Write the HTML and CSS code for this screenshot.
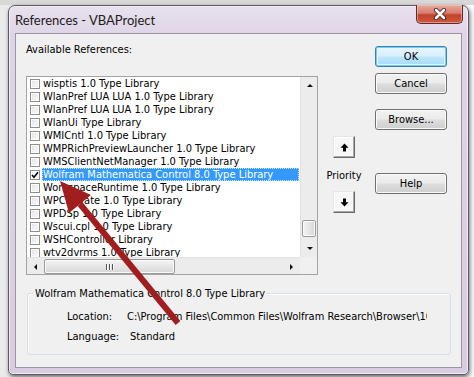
FILE: index.html
```html
<!DOCTYPE html>
<html>
<head>
<meta charset="utf-8">
<title>References - VBAProject</title>
<link rel="stylesheet" href="styles.css">
</head>
<body>
<div class="desk">
  <div class="window">
    <div class="titlebar">
      <span class="title">References - VBAProject</span>
      <div class="close">
        <svg width="16" height="12" viewBox="0 0 16 12"><path d="M4 2 L12 10 M12 2 L4 10" stroke="#3a1a14" stroke-width="4.2" stroke-linecap="round"/><path d="M4 2 L12 10 M12 2 L4 10" stroke="#fff" stroke-width="2.6" stroke-linecap="round"/></svg>
      </div>
    </div>
    <div class="client">
      <div class="top">
        <div class="refs">
          <div class="label">Available References:</div>
          <div class="listbox">
            <div class="rows">
              <div class="row"><span class="cb"></span><span class="txt">wisptis 1.0 Type Library</span></div>
              <div class="row"><span class="cb"></span><span class="txt">WlanPref LUA LUA 1.0 Type Library</span></div>
              <div class="row"><span class="cb"></span><span class="txt">WlanPref LUA LUA 1.0 Type Library</span></div>
              <div class="row"><span class="cb"></span><span class="txt">WlanUi Type Library</span></div>
              <div class="row"><span class="cb"></span><span class="txt">WMICntl 1.0 Type Library</span></div>
              <div class="row"><span class="cb"></span><span class="txt">WMPRichPreviewLauncher 1.0 Type Library</span></div>
              <div class="row"><span class="cb"></span><span class="txt">WMSClientNetManager 1.0 Type Library</span></div>
              <div class="row"><span class="cb checked"><svg width="8" height="8" viewBox="0 0 8 8"><path d="M1 4 L3 6.3 L7 1.2" fill="none" stroke="#000" stroke-width="1.6"/></svg></span><span class="txt selected">Wolfram Mathematica Control 8.0 Type Library</span></div>
              <div class="row"><span class="cb"></span><span class="txt">WorkspaceRuntime 1.0 Type Library</span></div>
              <div class="row"><span class="cb"></span><span class="txt">WPCPrivate 1.0 Type Library</span></div>
              <div class="row"><span class="cb"></span><span class="txt">WPDSp 1.0 Type Library</span></div>
              <div class="row"><span class="cb"></span><span class="txt">Wscui.cpl 1.0 Type Library</span></div>
              <div class="row"><span class="cb"></span><span class="txt">WSHController Library</span></div>
              <div class="row"><span class="cb"></span><span class="txt">wtv2dvrms 1.0 Type Library</span></div>
            </div>
            <div class="vscroll">
              <span class="arr up"></span>
              <div class="vtrack"><div class="vthumb"></div></div>
              <span class="arr down"></span>
            </div>
            <div class="hscroll">
              <span class="arr left"></span>
              <div class="htrack"><div class="hthumb"><i></i><i></i><i></i></div></div>
              <span class="arr right"></span>
            </div>
            <div class="corner"></div>
          </div>
        </div>
        <div class="priority">
          <button class="pbtn"><svg width="9" height="9" viewBox="0 0 9 9"><path d="M4.5 0.5 L8.5 4.8 L6 4.8 L6 8.5 L3 8.5 L3 4.8 L0.5 4.8 Z" fill="#000"/></svg></button>
          <div class="plabel">Priority</div>
          <button class="pbtn"><svg width="9" height="9" viewBox="0 0 9 9"><path d="M4.5 8.5 L8.5 4.2 L6 4.2 L6 0.5 L3 0.5 L3 4.2 L0.5 4.2 Z" fill="#000"/></svg></button>
        </div>
        <div class="actions">
          <button class="btn default">OK</button>
          <button class="btn cancel">Cancel</button>
          <button class="btn browse">Browse...</button>
          <button class="btn help">Help</button>
        </div>
      </div>
      <div class="group">
        <div class="legend">Wolfram Mathematica Control 8.0 Type Library</div>
        <div class="info first"><span class="k">Location:</span><span class="v path">C:\Program Files\Common Files\Wolfram Research\Browser\10.0\Mathematica.dll</span></div>
        <div class="info"><span class="k">Language:</span><span class="v lang">Standard</span></div>
      </div>
    </div>
  </div>
</div>
<svg class="arrow" width="474" height="377" viewBox="0 0 474 377">
  <line x1="80" y1="204" x2="178" y2="323" stroke="#a11e1e" stroke-width="6"/>
  <polygon points="60,181 69,213 91,195" fill="#a11e1e"/>
</svg>
</body>
</html>
```

FILE: styles.css
```css
* { box-sizing: border-box; }
html, body { margin: 0; padding: 0; }
body {
  width: 474px;
  height: 377px;
  overflow: hidden;
  position: relative;
  background: linear-gradient(to right, #ebebeb 0, #ebebeb 466px, #fbfbfb 466px);
  font-family: "DejaVu Sans Condensed", "DejaVu Sans", sans-serif;
  font-size: 11px;
  color: #000;
}
.desk {
  height: 377px;
  padding: 5px 0 0 8px;
  background: linear-gradient(#d8d8d8 0, #d8d8d8 5px, transparent 5px);
}
.window {
  width: 461px;
  height: 370px;
  border: 1px solid #5c5866;
  border-radius: 7px 7px 5px 5px;
  background: linear-gradient(#e9e1ee 0, #dfd4e6 30px, #d9cce0 100%);
  box-shadow: 1px 2px 4px rgba(0, 0, 0, 0.55), inset 0 0 0 1px rgba(255,255,255,0.6);
  padding: 0 6px 6px 6px;
  display: flex;
  flex-direction: column;
}
.titlebar {
  height: 27px;
  display: flex;
  align-items: center;
  position: relative;
}
.title {
  font-family: Lato, "Open Sans", sans-serif;
  font-size: 13px;
  color: #1b1b1b;
  margin-top: 1px;
}
.close {
  margin-left: auto;
  margin-right: -1px;
  align-self: flex-start;
  margin-top: -1px;
  width: 47px;
  height: 19px;
  border: 1px solid #5e2a24;
  border-top: none;
  border-radius: 0 0 5px 5px;
  background: linear-gradient(#e6a89c 0, #d87d6e 45%, #c3412c 55%, #cd5a40 100%);
  box-shadow: inset 0 0 0 1px rgba(255, 210, 200, 0.5);
  display: flex;
  align-items: center;
  justify-content: center;
}
.client {
  flex: 1;
  border: 1px solid #9a94a4;
  background: #f0f0f0;
  padding: 9px 0 0 10px;
  display: flex;
  flex-direction: column;
}
.top { display: flex; }
.refs { width: 292px; }
.label { line-height: 13px; height: 13px; }
.listbox {
  margin-top: 20px;
  width: 292px;
  height: 199px;
  border: 1px solid #a3a3a3;
  background: #fff;
  display: grid;
  grid-template-columns: 273px 17px;
  grid-template-rows: 180px 17px;
}
.rows { overflow: hidden; }
.row {
  height: 13px;
  display: flex;
  align-items: center;
  padding-left: 3px;
  white-space: nowrap;
}
.cb {
  width: 10px;
  height: 10px;
  border: 1px solid #8e8f8f;
  background: linear-gradient(135deg, #e4e4e4, #fbfbfb);
  box-shadow: inset 0 0 0 1px #fff;
  flex: none;
  display: flex;
  align-items: center;
  justify-content: center;
}
.cb.checked { background: #fff; box-shadow: none; }
.txt {
  margin-left: 2px;
  padding-left: 1px;
  line-height: 13px;
  height: 13px;
  flex: 1;
  margin-right: 1px;
}
.txt.selected {
  background: #3399ff;
  color: #fff;
  outline: 1px dotted #cfe4fb;
  outline-offset: -1px;
}
.vscroll {
  background: #ececec;
  border-left: 1px solid #e2e2e2;
  display: flex;
  flex-direction: column;
}
.vtrack { flex: 1; }
.vthumb {
  margin: 126px 1px 0 1px;
  height: 17px;
  border: 1px solid #9a9a9a;
  border-radius: 2px;
  background: linear-gradient(to right, #f4f4f4, #e6e6e6 50%, #d6d6d6);
  box-shadow: inset 0 0 0 1px #fafafa;
}
.hscroll {
  background: #ececec;
  border-top: 1px solid #e2e2e2;
  display: flex;
}
.htrack { flex: 1; }
.hthumb {
  margin-top: 1px;
  width: 131px;
  height: 15px;
  border: 1px solid #9a9a9a;
  border-radius: 2px;
  background: linear-gradient(#f4f4f4, #e6e6e6 50%, #d6d6d6);
  box-shadow: inset 0 0 0 1px #fafafa;
  display: flex;
  justify-content: center;
  align-items: center;
  gap: 2px;
}
.hthumb i {
  width: 1px;
  height: 6px;
  background: #555;
  box-shadow: 1px 0 0 #fff;
}
.corner { background: #f0f0f0; }
.arr {
  width: 17px;
  height: 17px;
  flex: none;
  display: flex;
  align-items: center;
  justify-content: center;
}
.arr::before { content: ""; width: 0; height: 0; }
.arr.up::before { border-left: 3px solid transparent; border-right: 3px solid transparent; border-bottom: 3px solid #111; }
.arr.down::before { border-left: 3px solid transparent; border-right: 3px solid transparent; border-top: 3px solid #111; }
.arr.left::before { border-top: 3px solid transparent; border-bottom: 3px solid transparent; border-right: 3px solid #111; }
.arr.right::before { border-top: 3px solid transparent; border-bottom: 3px solid transparent; border-left: 3px solid #111; }

.priority {
  margin-left: 15px;
  width: 22px;
  display: flex;
  flex-direction: column;
  align-items: center;
}
.pbtn {
  width: 22px;
  height: 22px;
  padding: 0;
  margin: 0;
  border: 1px solid;
  border-color: #e6e6e6 #6a6a6a #6a6a6a #e6e6e6;
  background: #f7f7f7;
  box-shadow: inset -1px -1px 0 #a8a8a8, inset 1px 1px 0 #fff;
  display: flex;
  align-items: center;
  justify-content: center;
}
.pbtn:first-child { margin-top: 93px; }
.plabel {
  line-height: 13px;
  margin: 11px -10px 9px -10px;
  white-space: nowrap;
}
.actions {
  margin-left: 20px;
  width: 72px;
  display: flex;
  flex-direction: column;
}
.btn {
  width: 72px;
  height: 21px;
  padding: 0;
  margin: 0;
  font-family: inherit;
  font-size: 11px;
  color: #000;
  border: 1px solid #707070;
  border-radius: 3px;
  background: linear-gradient(#f2f2f2 0, #ebebeb 48%, #dddddd 52%, #cfcfcf 100%);
  box-shadow: inset 0 0 0 1px #fbfbfb;
}
.btn.default {
  margin-top: 3px;
  border-color: #3c7fb1;
  background: linear-gradient(#eaf6fd 0, #d9f0fc 48%, #bee6fd 52%, #a7d9f5 100%);
  box-shadow: inset 0 0 0 1px #6fd0f6, inset 0 0 0 2px #e3f6fd;
}
.btn.cancel { margin-top: 6px; }
.btn.browse { margin-top: 15px; }
.btn.help { margin-top: 43px; }

.group {
  margin: 18px 0 0 1px;
  width: 424px;
  height: 62px;
  border: 1px solid #d5dfe5;
  border-radius: 3px;
  box-shadow: inset 1px 1px 0 #fff;
}
.legend {
  width: max-content;
  margin: -7px 0 0 5px;
  padding: 0 2px;
  background: #f0f0f0;
  line-height: 13px;
}
.info {
  display: flex;
  line-height: 13px;
  padding-left: 39px;
  margin-top: 7px;
  white-space: nowrap;
}
.info.first { margin-top: 10px; }
.k { width: 60px; flex: none; }
.v { overflow: hidden; }
.path { width: 300px; }
.lang { padding-left: 3px; }

.arrow {
  position: absolute;
  left: 0;
  top: 0;
  pointer-events: none;
}
```
